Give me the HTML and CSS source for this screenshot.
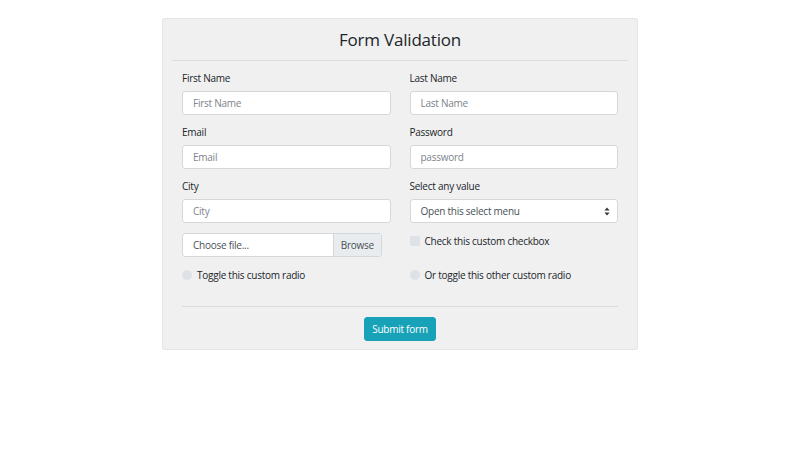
FILE: index.html
```html
<!DOCTYPE html>
<html>
<head>
<meta charset="utf-8">
<link rel="stylesheet" href="styles.css">
</head>
<body>
<div class="card">
  <h1 class="title">Form Validation</h1>
  <form class="form">
    <div class="grid">
      <div class="group">
        <label class="label">First Name</label>
        <input class="input" placeholder="First Name">
      </div>
      <div class="group">
        <label class="label">Last Name</label>
        <input class="input" placeholder="Last Name">
      </div>
      <div class="group">
        <label class="label">Email</label>
        <input class="input" placeholder="Email">
      </div>
      <div class="group">
        <label class="label">Password</label>
        <input class="input" placeholder="password">
      </div>
      <div class="group">
        <label class="label">City</label>
        <input class="input" placeholder="City">
      </div>
      <div class="group">
        <label class="label">Select any value</label>
        <div class="select">
          <span>Open this select menu</span>
          <svg class="caret" width="6" height="9" viewBox="0 0 6 9"><path d="M3 0.5 L5.6 3.6 H0.4 Z M3 8.5 L5.6 5.4 H0.4 Z" fill="#343a40"/></svg>
        </div>
      </div>
      <div class="group">
        <div class="file">
          <span class="file-text">Choose file...</span>
          <span class="file-btn">Browse</span>
        </div>
      </div>
      <div class="group">
        <div class="check"><span class="box"></span><span>Check this custom checkbox</span></div>
      </div>
      <div class="group">
        <div class="check"><span class="box round"></span><span>Toggle this custom radio</span></div>
      </div>
      <div class="group">
        <div class="check"><span class="box round"></span><span>Or toggle this other custom radio</span></div>
      </div>
    </div>
    <div class="footer">
      <button class="btn" type="button">Submit form</button>
    </div>
  </form>
</div>
</body>
</html>
```
FILE: styles.css
```css
* { box-sizing: border-box; }
body {
  margin: 0;
  font-family: "Open Sans", "Noto Sans", sans-serif;
  color: #212529;
  background: #fff;
}
.card {
  width: 476px;
  margin: 18px auto 0;
  background: #f0f0f0;
  border: 1px solid #e6e6e6;
  border-radius: 2px;
  padding: 0 9px 8px;
}
.title {
  margin: 0;
  font-weight: 400;
  font-size: 17px;
  letter-spacing: -0.2px;
  line-height: 24px;
  text-align: center;
  padding: 9px 0 8px;
  border-bottom: 1px solid #dcdcdc;
}
.form {
  padding: 0 10px;
}
.grid {
  display: grid;
  grid-template-columns: 1fr 1fr;
  column-gap: 19px;
  padding-top: 10px;
}
.group {
  margin-bottom: 10px;
}
.label {
  display: block;
  font-size: 10px;
  letter-spacing: -0.25px;
  line-height: 15px;
  margin-bottom: 5px;
}
.input, .select, .file {
  display: block;
  width: 100%;
  height: 24px;
  border: 1px solid #d4d8dc;
  border-radius: 3px;
  background: #fff;
  font-family: inherit;
  font-size: 10px;
  letter-spacing: -0.25px;
  padding: 0 10px;
  color: #495057;
}
.input::placeholder { color: #7d848b; }
.select {
  display: flex;
  align-items: center;
  justify-content: space-between;
  padding-right: 7px;
  color: #495057;
}
.file {
  display: flex;
  padding: 0;
  width: 200px;
  overflow: hidden;
}
.file-text {
  flex: 1;
  display: flex;
  align-items: center;
  padding: 0 10px;
  color: #495057;
}
.file-btn {
  display: flex;
  align-items: center;
  padding: 0 7px;
  background: #e9ecef;
  border-left: 1px solid #d4d8dc;
  color: #495057;
}
.check {
  display: flex;
  align-items: center;
  font-size: 10px;
  letter-spacing: -0.25px;
  height: 16px;
}
.box {
  width: 10px;
  height: 10px;
  border-radius: 2px;
  background: #dee2e6;
  margin-right: 5px;
}
.box.round { border-radius: 50%; }
.footer {
  display: flex;
  justify-content: center;
  border-top: 1px solid #dcdcdc;
  margin-top: 13px;
  padding-top: 10px;
}
.btn {
  background: #17a2b8;
  color: #fff;
  border: 1px solid #17a2b8;
  border-radius: 3px;
  font-family: inherit;
  font-size: 10px;
  letter-spacing: -0.25px;
  height: 24px;
  padding: 0 7px;
}
```
